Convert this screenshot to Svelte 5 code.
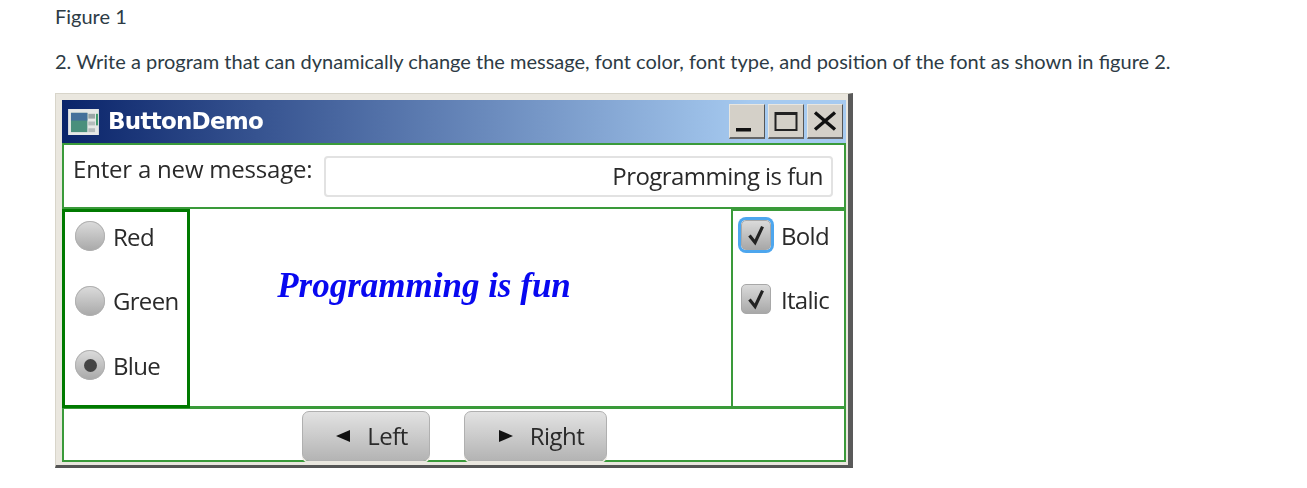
<script lang="ts">
	let message = 'Programming is fun';
	const colors = ['Red', 'Green', 'Blue'];
	const styles = ['Bold', 'Italic'];
</script>

<main>
	<p class="caption">Figure 1</p>
	<p class="task">2. Write a program that can dynamically change the message, font color, font type, and position of the font as shown in figure 2.</p>

	<div class="window">
		<div class="titlebar">
			<svg class="appicon" width="31" height="26" viewBox="0 0 32 27">
				<rect width="32" height="27" fill="#e6e8e6" />
				<rect x="3" y="4" width="17" height="20" fill="#4a8f7c" />
				<rect x="3" y="4" width="17" height="8" fill="#44709a" />
				<rect x="21" y="5" width="7" height="5" fill="#9aa5a5" />
				<rect x="21" y="13" width="7" height="4" fill="#b5bcbc" />
				<rect x="21" y="20" width="7" height="4" fill="#b5bcbc" />
				<rect x="29" y="5" width="2" height="12" fill="#3f9a6a" />
			</svg>
			<span class="title">ButtonDemo</span>
			<div class="controls">
				<span class="ctl">
					<svg width="32" height="32" viewBox="0 0 32 32"><rect x="5" y="23" width="15" height="3.5" fill="#111" /></svg>
				</span>
				<span class="ctl">
					<svg width="32" height="32" viewBox="0 0 32 32"><rect x="5.5" y="8" width="21" height="17" fill="none" stroke="#222" stroke-width="2" /><path d="M5 8.5h22" stroke="#222" stroke-width="3" /></svg>
				</span>
				<span class="ctl close">
					<svg width="32" height="32" viewBox="0 0 32 32"><path d="M6 7.5 L26 24.5 M26 7.5 L6 24.5" stroke="#111" stroke-width="3.4" /></svg>
				</span>
			</div>
		</div>

		<div class="top">
			<span class="label">Enter a new message:</span>
			<div class="field">{message}</div>
		</div>

		<div class="middle">
			<div class="radios">
				{#each colors as color}
					<div class="radio-row">
						<span class="radio" class:on={color === 'Blue'}></span>
						<span>{color}</span>
					</div>
				{/each}
			</div>
			<div class="canvas">
				<span class="message">{message}</span>
			</div>
			<div class="checks">
				{#each styles as style}
					<div class="check-row">
						<span class="check" class:focused={style === 'Bold'}>
							<svg width="30" height="30" viewBox="0 0 30 30"><path d="M8 15.5 L14 23 L22 6" fill="none" stroke="#222" stroke-width="3.4" /></svg>
						</span>
						<span>{style}</span>
					</div>
				{/each}
			</div>
		</div>

		<div class="bottom">
			<button type="button"><span class="tri left"></span>Left</button>
			<button type="button" class="wide"><span class="tri right"></span>Right</button>
		</div>
	</div>
</main>

<style>
	:global(body) {
		background: #fff;
	}

	main {
		height: 488px;
		overflow: hidden;
		padding-left: 55px;
		font-family: Lato, sans-serif;
		color: #2d3b45;
		box-sizing: border-box;
	}

	p {
		margin: 0;
		font-size: 20px;
		line-height: 24px;
	}

	.caption {
		padding-top: 4px;
	}

	.task {
		margin-top: 21px;
		white-space: nowrap;
	}

	.window {
		margin-top: 20px;
		width: 798px;
		height: 375px;
		box-sizing: border-box;
		padding: 6px 2px 3px 6px;
		background: #eae7df;
		border: 1px solid #d8d5ca;
		border-right: 5px solid #5a5a5a;
		border-bottom: 3px solid #555;
		font-family: "Open Sans", sans-serif;
		color: #2a2a2a;
		font-size: 24px;
		filter: blur(0.5px);
	}

	.titlebar {
		height: 43px;
		display: flex;
		align-items: center;
		padding-left: 6px;
		background: linear-gradient(90deg, #0a246a, #a6caf0 88%);
	}

	.appicon {
		flex: none;
	}

	.title {
		margin-left: 9px;
		font-family: "DejaVu Sans", sans-serif;
		font-weight: 700;
		font-size: 23px;
		letter-spacing: -0.75px;
		color: #fff;
		margin-top: -2px;
	}

	.controls {
		margin-left: auto;
		display: flex;
		gap: 3px;
		padding-right: 3px;
	}

	.ctl {
		width: 36px;
		height: 35px;
		display: flex;
		align-items: center;
		justify-content: center;
		background: #d4d0c8;
		border-top: 1px solid #e8e6e0;
		border-left: 1px solid #e8e6e0;
		border-right: 1px solid #555;
		border-bottom: 2px solid #666;
		box-sizing: border-box;
	}

	.top {
		height: 66px;
		box-sizing: border-box;
		background: #fff;
		border: 2px solid #3a9a3a;
		display: flex;
		padding: 11px 11px 11px 9px;
		gap: 12px;
	}

	.label {
		letter-spacing: -0.2px;
		line-height: 26px;
		white-space: nowrap;
	}

	.field {
		flex: 1;
		height: 41px;
		box-sizing: border-box;
		border: 2px solid #e2e2e2;
		border-radius: 4px;
		text-align: right;
		padding-right: 8px;
		line-height: 36px;
		letter-spacing: -0.55px;
	}

	.middle {
		display: flex;
		height: 199px;
		background: #fff;
	}

	.radios {
		width: 128px;
		box-sizing: border-box;
		border: 3px solid #007a00;
		display: flex;
		flex-direction: column;
		padding: 9px 0 0 10px;
		gap: 34.5px;
	}

	.radio-row,
	.check-row {
		display: flex;
		align-items: center;
		height: 30px;
		letter-spacing: -0.7px;
	}

	.radio {
		width: 30px;
		height: 30px;
		border-radius: 50%;
		margin-right: 8px;
		background: linear-gradient(#dcdcdc, #a8a8a8);
		box-shadow: inset 0 0 0 1px #b0b0b0;
		display: flex;
		align-items: center;
		justify-content: center;
	}

	.radio.on::after {
		content: '';
		width: 13px;
		height: 13px;
		border-radius: 50%;
		background: #444;
	}

	.canvas {
		flex: 1;
		display: flex;
		align-items: center;
		justify-content: center;
		padding: 0 73px 43px 0;
		border-bottom: 2px solid #3a9a3a;
	}

	.message {
		font-family: "Liberation Serif", serif;
		font-weight: 700;
		font-style: italic;
		font-size: 35px;
		color: #0808f0;
	}

	.checks {
		width: 115px;
		box-sizing: border-box;
		border: 2px solid #3a9a3a;
		display: flex;
		flex-direction: column;
		padding: 9px 0 0 8px;
		gap: 34px;
	}

	.check {
		width: 30px;
		height: 30px;
		box-sizing: border-box;
		border-radius: 5px;
		margin-right: 10px;
		background: linear-gradient(#dadada, #a8a8a8);
		border: 1px solid #a8a8a8;
		display: flex;
		align-items: center;
		justify-content: center;
	}

	.check.focused {
		box-shadow: 0 0 0 3px #4da6ee;
	}

	.bottom {
		height: 54px;
		box-sizing: border-box;
		background: #fff;
		border: 2px solid #3a9a3a;
		border-top-width: 1px;
		display: flex;
		justify-content: center;
		gap: 34px;
		padding: 2px 0 0 1px;
	}

	button {
		flex: none;
		width: 128px;
		height: 50px;
		box-sizing: border-box;
		font: inherit;
		color: #2a2a2a;
		letter-spacing: -0.55px;
		background: linear-gradient(#e2e2e2, #b4b4b4);
		border: 1px solid #b0b0b0;
		border-radius: 7px;
		box-shadow: 0 2px 0 #eae7df;
		display: flex;
		align-items: center;
		justify-content: center;
		gap: 17px;
		padding: 0 0 2px 12px;
	}

	button.wide {
		width: 143px;
	}

	.tri {
		width: 0;
		height: 0;
		margin-top: 2px;
		border-top: 6px solid transparent;
		border-bottom: 6px solid transparent;
	}

	.tri.left {
		border-right: 14px solid #111;
	}

	.tri.right {
		border-left: 14px solid #111;
	}
</style>
